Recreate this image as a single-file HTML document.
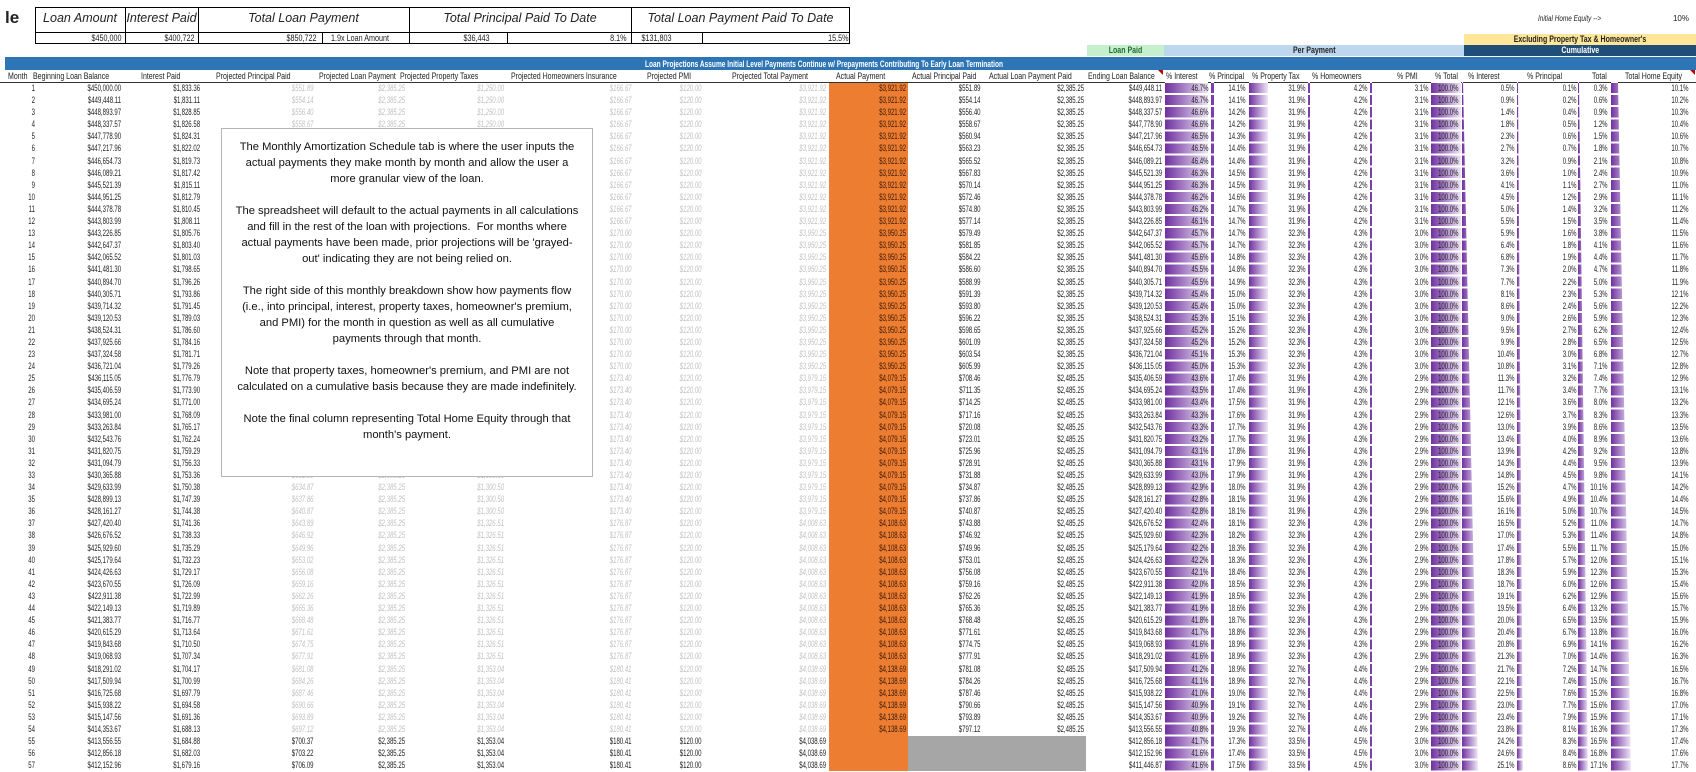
<!DOCTYPE html>
<html><head><meta charset="utf-8">
<style>
body{margin:0;width:1696px;height:771px;position:relative;overflow:hidden;background:#fff;font-family:"Liberation Sans",sans-serif;color:#222}
.c{position:absolute;top:82px;font-size:9px;line-height:12.1px;text-align:right;white-space:nowrap;transform:scaleX(.67);transform-origin:100% 0}
.g{color:#c2c2c2;font-style:italic}
.h{position:absolute;top:70px;font-size:9px;line-height:12px;white-space:nowrap;transform:scaleX(.78);transform-origin:0 0}
.b{position:absolute;top:82px;height:690px;background:repeating-linear-gradient(#fff 0 1px,transparent 1px 11.1px,#fff 11.1px 12.1px),linear-gradient(to right,#7030a0,#efe6f6)}
.d{background:repeating-linear-gradient(#fff 0 1px,transparent 1px 11.1px,#fff 11.1px 12.1px),#7a3fae}
.box{position:absolute;border:1px solid #bbb;box-sizing:border-box}
.tl{position:absolute;font-style:italic;font-size:12.5px;text-align:center}
.tv{position:absolute;top:33px;font-size:9px;line-height:10px;white-space:nowrap;transform:scaleX(.8);transform-origin:100% 0;text-align:right}
.band{position:absolute;font-size:9px;font-weight:bold;line-height:11px;text-align:center;white-space:nowrap}
.band span{display:inline-block;transform:scaleX(.78)}
</style></head><body>

<div style="position:absolute;left:5px;top:8px;font-size:17px;font-weight:bold">le</div>

<!-- top summary table -->
<div style="position:absolute;left:35px;top:7px;width:815px;height:37px;border:1px solid #000;box-sizing:border-box"></div>
<div style="position:absolute;left:35px;top:32px;width:815px;height:1px;background:#000"></div>
<div style="position:absolute;left:125px;top:7px;width:1px;height:37px;background:#000"></div>
<div style="position:absolute;left:198px;top:7px;width:1px;height:37px;background:#000"></div>
<div style="position:absolute;left:409px;top:7px;width:1px;height:37px;background:#000"></div>
<div style="position:absolute;left:631px;top:7px;width:1px;height:37px;background:#000"></div>
<div style="position:absolute;left:322px;top:32px;width:1px;height:12px;background:#000"></div>
<div style="position:absolute;left:507px;top:32px;width:1px;height:12px;background:#000"></div>
<div style="position:absolute;left:702px;top:32px;width:1px;height:12px;background:#000"></div>
<div class="tl" style="left:35px;width:90px;top:11px">Loan Amount</div>
<div class="tl" style="left:125px;width:73px;top:11px">Interest Paid</div>
<div class="tl" style="left:198px;width:211px;top:11px">Total Loan Payment</div>
<div class="tl" style="left:409px;width:222px;top:11px">Total Principal Paid To Date</div>
<div class="tl" style="left:631px;width:219px;top:11px">Total Loan Payment Paid To Date</div>
<div class="tv" style="right:1574px">$450,000</div>
<div class="tv" style="right:1501px">$400,722</div>
<div class="tv" style="right:1379px">$850,722</div>
<div class="tv" style="left:331px;transform-origin:0 0;text-align:left">1.9x Loan Amount</div>
<div class="tv" style="right:1206px">$36,443</div>
<div class="tv" style="right:1069px">8.1%</div>
<div class="tv" style="right:1024px">$131,803</div>
<div class="tv" style="right:847px">15.5%</div>

<div style="position:absolute;left:1538px;top:14px;font-size:8px;font-style:italic;white-space:nowrap;transform:scaleX(.8);transform-origin:0 0">Initial Home Equity --&gt;</div>
<div style="position:absolute;right:7px;top:14px;font-size:8px">10%</div>

<!-- bands -->
<div class="band" style="left:1464px;width:232px;top:34px;background:#ffe699"><span>Excluding Property Tax &amp; Homeowner's</span></div>
<div class="band" style="left:1087px;width:77px;top:45px;background:#c6efce;color:#1e6b2e"><span>Loan Paid</span></div>
<div class="band" style="left:1164px;width:300px;top:45px;background:#bdd7ee"><span>Per Payment</span></div>
<div class="band" style="left:1464px;width:232px;top:45px;background:#1f4e79;color:#fff"><span>Cumulative</span></div>
<div style="position:absolute;left:5px;width:1691px;top:57px;height:13px;background:#2e75b6"></div>
<div style="position:absolute;left:645px;top:59px;font-size:9px;font-weight:bold;color:#fff;white-space:nowrap;transform:scaleX(.73);transform-origin:0 0">Loan Projections Assume Initial Level Payments Continue w/ Prepayments Contributing To Early Loan Termination</div>

<!-- column headers -->
<div class="h" style="left:8px">Month</div>
<div class="h" style="left:33px">Beginning Loan Balance</div>
<div class="h" style="left:141px">Interest Paid</div>
<div class="h" style="left:216px">Projected Principal Paid</div>
<div class="h" style="left:319px">Projected Loan Payment</div>
<div class="h" style="left:400px">Projected Property Taxes</div>
<div class="h" style="left:511px">Projected Homeowners Insurance</div>
<div class="h" style="left:647px">Projected PMI</div>
<div class="h" style="left:732px">Projected Total Payment</div>
<div class="h" style="left:836px">Actual Payment</div>
<div class="h" style="left:912px">Actual Principal Paid</div>
<div class="h" style="left:989px">Actual Loan Payment Paid</div>
<div class="h" style="left:1088px">Ending Loan Balance</div>
<div class="h" style="left:1166px">% Interest</div>
<div class="h" style="left:1209px">% Principal</div>
<div class="h" style="left:1252px">% Property Tax</div>
<div class="h" style="left:1312px">% Homeowners</div>
<div class="h" style="left:1397px">% PMI</div>
<div class="h" style="left:1435px">% Total</div>
<div class="h" style="left:1468px">% Interest</div>
<div class="h" style="left:1527px">% Principal</div>
<div class="h" style="left:1592px">Total</div>
<div class="h" style="left:1625px">Total Home Equity</div>
<div style="position:absolute;left:0;width:1696px;top:82px;height:1px;background:#333"></div>
<div style="position:absolute;left:1158px;top:70px;width:0;height:0;border-top:5px solid #c00000;border-left:5px solid transparent"></div>
<div style="position:absolute;left:1690px;top:70px;width:0;height:0;border-top:5px solid #c00000;border-left:5px solid transparent"></div>

<!-- orange & gray -->
<div style="position:absolute;left:829px;top:83px;width:79px;height:688px;background:#ed7d31"></div>
<div style="position:absolute;left:908px;top:736px;width:178px;height:35px;background:#a6a6a6"></div>

<!-- bars -->
<div class="b" style="left:1165px;width:43px"></div>
<div class="b d" style="left:1211px;width:3px"></div>
<div class="b" style="left:1249px;width:19px"></div>
<div class="b d" style="left:1308px;width:2px"></div>
<div class="b d" style="left:1370px;width:2px"></div>
<div class="b" style="left:1431px;width:30px"></div>
<div class="b" style="left:1462px;width:16px;clip-path:polygon(0 0,1px 0,100% 100%,0 100%)"></div>
<div class="b" style="left:1517px;width:6px;clip-path:polygon(0 0,1px 0,100% 100%,0 100%)"></div>
<div class="b" style="left:1578px;width:10px;clip-path:polygon(0 0,1px 0,100% 100%,0 100%)"></div>
<div class="b" style="left:1611px;width:20px;clip-path:polygon(0 0,35% 0,100% 100%,0 100%)"></div>

<!-- data columns -->
<div class="c" style="right:1661px">1<br>2<br>3<br>4<br>5<br>6<br>7<br>8<br>9<br>10<br>11<br>12<br>13<br>14<br>15<br>16<br>17<br>18<br>19<br>20<br>21<br>22<br>23<br>24<br>25<br>26<br>27<br>28<br>29<br>30<br>31<br>32<br>33<br>34<br>35<br>36<br>37<br>38<br>39<br>40<br>41<br>42<br>43<br>44<br>45<br>46<br>47<br>48<br>49<br>50<br>51<br>52<br>53<br>54<br>55<br>56<br>57</div>

<div class="c" style="right:1575px">$450,000.00<br>$449,448.11<br>$448,893.97<br>$448,337.57<br>$447,778.90<br>$447,217.96<br>$446,654.73<br>$446,089.21<br>$445,521.39<br>$444,951.25<br>$444,378.78<br>$443,803.99<br>$443,226.85<br>$442,647.37<br>$442,065.52<br>$441,481.30<br>$440,894.70<br>$440,305.71<br>$439,714.32<br>$439,120.53<br>$438,524.31<br>$437,925.66<br>$437,324.58<br>$436,721.04<br>$436,115.05<br>$435,406.59<br>$434,695.24<br>$433,981.00<br>$433,263.84<br>$432,543.76<br>$431,820.75<br>$431,094.79<br>$430,365.88<br>$429,633.99<br>$428,899.13<br>$428,161.27<br>$427,420.40<br>$426,676.52<br>$425,929.60<br>$425,179.64<br>$424,426.63<br>$423,670.55<br>$422,911.38<br>$422,149.13<br>$421,383.77<br>$420,615.29<br>$419,843.68<br>$419,068.93<br>$418,291.02<br>$417,509.94<br>$416,725.68<br>$415,938.22<br>$415,147.56<br>$414,353.67<br>$413,556.55<br>$412,856.18<br>$412,152.96</div>

<div class="c" style="right:1496px">$1,833.36<br>$1,831.11<br>$1,828.85<br>$1,826.58<br>$1,824.31<br>$1,822.02<br>$1,819.73<br>$1,817.42<br>$1,815.11<br>$1,812.79<br>$1,810.45<br>$1,808.11<br>$1,805.76<br>$1,803.40<br>$1,801.03<br>$1,798.65<br>$1,796.26<br>$1,793.86<br>$1,791.45<br>$1,789.03<br>$1,786.60<br>$1,784.16<br>$1,781.71<br>$1,779.26<br>$1,776.79<br>$1,773.90<br>$1,771.00<br>$1,768.09<br>$1,765.17<br>$1,762.24<br>$1,759.29<br>$1,756.33<br>$1,753.36<br>$1,750.38<br>$1,747.39<br>$1,744.38<br>$1,741.36<br>$1,738.33<br>$1,735.29<br>$1,732.23<br>$1,729.17<br>$1,726.09<br>$1,722.99<br>$1,719.89<br>$1,716.77<br>$1,713.64<br>$1,710.50<br>$1,707.34<br>$1,704.17<br>$1,700.99<br>$1,697.79<br>$1,694.58<br>$1,691.36<br>$1,688.13<br>$1,684.88<br>$1,682.03<br>$1,679.16</div>

<div class="c" style="right:1382px"><span class="g">$551.89<br>$554.14<br>$556.40<br>$558.67<br>$560.94<br>$563.23<br>$565.52<br>$567.83<br>$570.14<br>$572.46<br>$574.80<br>$577.14<br>$579.49<br>$581.85<br>$584.22<br>$586.60<br>$588.99<br>$591.39<br>$593.80<br>$596.22<br>$598.65<br>$601.09<br>$603.54<br>$605.99<br>$608.46<br>$611.35<br>$614.25<br>$617.16<br>$620.08<br>$623.01<br>$625.96<br>$628.92<br>$631.89<br>$634.87<br>$637.86<br>$640.87<br>$643.89<br>$646.92<br>$649.96<br>$653.02<br>$656.08<br>$659.16<br>$662.26<br>$665.36<br>$668.48<br>$671.61<br>$674.75<br>$677.91<br>$681.08<br>$684.26<br>$687.46<br>$690.66<br>$693.89<br>$697.12</span><br>$700.37<br>$703.22<br>$706.09</div>

<div class="c" style="right:1291px"><span class="g">$2,385.25<br>$2,385.25<br>$2,385.25<br>$2,385.25<br>$2,385.25<br>$2,385.25<br>$2,385.25<br>$2,385.25<br>$2,385.25<br>$2,385.25<br>$2,385.25<br>$2,385.25<br>$2,385.25<br>$2,385.25<br>$2,385.25<br>$2,385.25<br>$2,385.25<br>$2,385.25<br>$2,385.25<br>$2,385.25<br>$2,385.25<br>$2,385.25<br>$2,385.25<br>$2,385.25<br>$2,385.25<br>$2,385.25<br>$2,385.25<br>$2,385.25<br>$2,385.25<br>$2,385.25<br>$2,385.25<br>$2,385.25<br>$2,385.25<br>$2,385.25<br>$2,385.25<br>$2,385.25<br>$2,385.25<br>$2,385.25<br>$2,385.25<br>$2,385.25<br>$2,385.25<br>$2,385.25<br>$2,385.25<br>$2,385.25<br>$2,385.25<br>$2,385.25<br>$2,385.25<br>$2,385.25<br>$2,385.25<br>$2,385.25<br>$2,385.25<br>$2,385.25<br>$2,385.25<br>$2,385.25</span><br>$2,385.25<br>$2,385.25<br>$2,385.25</div>

<div class="c" style="right:1192px"><span class="g">$1,250.00<br>$1,250.00<br>$1,250.00<br>$1,250.00<br>$1,250.00<br>$1,250.00<br>$1,250.00<br>$1,250.00<br>$1,250.00<br>$1,250.00<br>$1,250.00<br>$1,250.00<br>$1,275.00<br>$1,275.00<br>$1,275.00<br>$1,275.00<br>$1,275.00<br>$1,275.00<br>$1,275.00<br>$1,275.00<br>$1,275.00<br>$1,275.00<br>$1,275.00<br>$1,275.00<br>$1,300.50<br>$1,300.50<br>$1,300.50<br>$1,300.50<br>$1,300.50<br>$1,300.50<br>$1,300.50<br>$1,300.50<br>$1,300.50<br>$1,300.50<br>$1,300.50<br>$1,300.50<br>$1,326.51<br>$1,326.51<br>$1,326.51<br>$1,326.51<br>$1,326.51<br>$1,326.51<br>$1,326.51<br>$1,326.51<br>$1,326.51<br>$1,326.51<br>$1,326.51<br>$1,326.51<br>$1,353.04<br>$1,353.04<br>$1,353.04<br>$1,353.04<br>$1,353.04<br>$1,353.04</span><br>$1,353.04<br>$1,353.04<br>$1,353.04</div>

<div class="c" style="right:1064px"><span class="g">$166.67<br>$166.67<br>$166.67<br>$166.67<br>$166.67<br>$166.67<br>$166.67<br>$166.67<br>$166.67<br>$166.67<br>$166.67<br>$166.67<br>$170.00<br>$170.00<br>$170.00<br>$170.00<br>$170.00<br>$170.00<br>$170.00<br>$170.00<br>$170.00<br>$170.00<br>$170.00<br>$170.00<br>$173.40<br>$173.40<br>$173.40<br>$173.40<br>$173.40<br>$173.40<br>$173.40<br>$173.40<br>$173.40<br>$173.40<br>$173.40<br>$173.40<br>$176.87<br>$176.87<br>$176.87<br>$176.87<br>$176.87<br>$176.87<br>$176.87<br>$176.87<br>$176.87<br>$176.87<br>$176.87<br>$176.87<br>$180.41<br>$180.41<br>$180.41<br>$180.41<br>$180.41<br>$180.41</span><br>$180.41<br>$180.41<br>$180.41</div>

<div class="c" style="right:994px"><span class="g">$120.00<br>$120.00<br>$120.00<br>$120.00<br>$120.00<br>$120.00<br>$120.00<br>$120.00<br>$120.00<br>$120.00<br>$120.00<br>$120.00<br>$120.00<br>$120.00<br>$120.00<br>$120.00<br>$120.00<br>$120.00<br>$120.00<br>$120.00<br>$120.00<br>$120.00<br>$120.00<br>$120.00<br>$120.00<br>$120.00<br>$120.00<br>$120.00<br>$120.00<br>$120.00<br>$120.00<br>$120.00<br>$120.00<br>$120.00<br>$120.00<br>$120.00<br>$120.00<br>$120.00<br>$120.00<br>$120.00<br>$120.00<br>$120.00<br>$120.00<br>$120.00<br>$120.00<br>$120.00<br>$120.00<br>$120.00<br>$120.00<br>$120.00<br>$120.00<br>$120.00<br>$120.00<br>$120.00</span><br>$120.00<br>$120.00<br>$120.00</div>

<div class="c" style="right:870px"><span class="g">$3,921.92<br>$3,921.92<br>$3,921.92<br>$3,921.92<br>$3,921.92<br>$3,921.92<br>$3,921.92<br>$3,921.92<br>$3,921.92<br>$3,921.92<br>$3,921.92<br>$3,921.92<br>$3,950.25<br>$3,950.25<br>$3,950.25<br>$3,950.25<br>$3,950.25<br>$3,950.25<br>$3,950.25<br>$3,950.25<br>$3,950.25<br>$3,950.25<br>$3,950.25<br>$3,950.25<br>$3,979.15<br>$3,979.15<br>$3,979.15<br>$3,979.15<br>$3,979.15<br>$3,979.15<br>$3,979.15<br>$3,979.15<br>$3,979.15<br>$3,979.15<br>$3,979.15<br>$3,979.15<br>$4,008.63<br>$4,008.63<br>$4,008.63<br>$4,008.63<br>$4,008.63<br>$4,008.63<br>$4,008.63<br>$4,008.63<br>$4,008.63<br>$4,008.63<br>$4,008.63<br>$4,008.63<br>$4,038.69<br>$4,038.69<br>$4,038.69<br>$4,038.69<br>$4,038.69<br>$4,038.69</span><br>$4,038.69<br>$4,038.69<br>$4,038.69</div>

<div class="c" style="right:790px;color:#3a1a08">$3,921.92<br>$3,921.92<br>$3,921.92<br>$3,921.92<br>$3,921.92<br>$3,921.92<br>$3,921.92<br>$3,921.92<br>$3,921.92<br>$3,921.92<br>$3,921.92<br>$3,921.92<br>$3,950.25<br>$3,950.25<br>$3,950.25<br>$3,950.25<br>$3,950.25<br>$3,950.25<br>$3,950.25<br>$3,950.25<br>$3,950.25<br>$3,950.25<br>$3,950.25<br>$3,950.25<br>$4,079.15<br>$4,079.15<br>$4,079.15<br>$4,079.15<br>$4,079.15<br>$4,079.15<br>$4,079.15<br>$4,079.15<br>$4,079.15<br>$4,079.15<br>$4,079.15<br>$4,079.15<br>$4,108.63<br>$4,108.63<br>$4,108.63<br>$4,108.63<br>$4,108.63<br>$4,108.63<br>$4,108.63<br>$4,108.63<br>$4,108.63<br>$4,108.63<br>$4,108.63<br>$4,108.63<br>$4,138.69<br>$4,138.69<br>$4,138.69<br>$4,138.69<br>$4,138.69<br>$4,138.69</div>

<div class="c" style="right:715px">$551.89<br>$554.14<br>$556.40<br>$558.67<br>$560.94<br>$563.23<br>$565.52<br>$567.83<br>$570.14<br>$572.46<br>$574.80<br>$577.14<br>$579.49<br>$581.85<br>$584.22<br>$586.60<br>$588.99<br>$591.39<br>$593.80<br>$596.22<br>$598.65<br>$601.09<br>$603.54<br>$605.99<br>$708.46<br>$711.35<br>$714.25<br>$717.16<br>$720.08<br>$723.01<br>$725.96<br>$728.91<br>$731.88<br>$734.87<br>$737.86<br>$740.87<br>$743.88<br>$746.92<br>$749.96<br>$753.01<br>$756.08<br>$759.16<br>$762.26<br>$765.36<br>$768.48<br>$771.61<br>$774.75<br>$777.91<br>$781.08<br>$784.26<br>$787.46<br>$790.66<br>$793.89<br>$797.12</div>

<div class="c" style="right:612px">$2,385.25<br>$2,385.25<br>$2,385.25<br>$2,385.25<br>$2,385.25<br>$2,385.25<br>$2,385.25<br>$2,385.25<br>$2,385.25<br>$2,385.25<br>$2,385.25<br>$2,385.25<br>$2,385.25<br>$2,385.25<br>$2,385.25<br>$2,385.25<br>$2,385.25<br>$2,385.25<br>$2,385.25<br>$2,385.25<br>$2,385.25<br>$2,385.25<br>$2,385.25<br>$2,385.25<br>$2,485.25<br>$2,485.25<br>$2,485.25<br>$2,485.25<br>$2,485.25<br>$2,485.25<br>$2,485.25<br>$2,485.25<br>$2,485.25<br>$2,485.25<br>$2,485.25<br>$2,485.25<br>$2,485.25<br>$2,485.25<br>$2,485.25<br>$2,485.25<br>$2,485.25<br>$2,485.25<br>$2,485.25<br>$2,485.25<br>$2,485.25<br>$2,485.25<br>$2,485.25<br>$2,485.25<br>$2,485.25<br>$2,485.25<br>$2,485.25<br>$2,485.25<br>$2,485.25<br>$2,485.25</div>

<div class="c" style="right:534px">$449,448.11<br>$448,893.97<br>$448,337.57<br>$447,778.90<br>$447,217.96<br>$446,654.73<br>$446,089.21<br>$445,521.39<br>$444,951.25<br>$444,378.78<br>$443,803.99<br>$443,226.85<br>$442,647.37<br>$442,065.52<br>$441,481.30<br>$440,894.70<br>$440,305.71<br>$439,714.32<br>$439,120.53<br>$438,524.31<br>$437,925.66<br>$437,324.58<br>$436,721.04<br>$436,115.05<br>$435,406.59<br>$434,695.24<br>$433,981.00<br>$433,263.84<br>$432,543.76<br>$431,820.75<br>$431,094.79<br>$430,365.88<br>$429,633.99<br>$428,899.13<br>$428,161.27<br>$427,420.40<br>$426,676.52<br>$425,929.60<br>$425,179.64<br>$424,426.63<br>$423,670.55<br>$422,911.38<br>$422,149.13<br>$421,383.77<br>$420,615.29<br>$419,843.68<br>$419,068.93<br>$418,291.02<br>$417,509.94<br>$416,725.68<br>$415,938.22<br>$415,147.56<br>$414,353.67<br>$413,556.55<br>$412,856.18<br>$412,152.96<br>$411,446.87</div>

<div class="c" style="right:487px">46.7%<br>46.7%<br>46.6%<br>46.6%<br>46.5%<br>46.5%<br>46.4%<br>46.3%<br>46.3%<br>46.2%<br>46.2%<br>46.1%<br>45.7%<br>45.7%<br>45.6%<br>45.5%<br>45.5%<br>45.4%<br>45.4%<br>45.3%<br>45.2%<br>45.2%<br>45.1%<br>45.0%<br>43.6%<br>43.5%<br>43.4%<br>43.3%<br>43.3%<br>43.2%<br>43.1%<br>43.1%<br>43.0%<br>42.9%<br>42.8%<br>42.8%<br>42.4%<br>42.3%<br>42.2%<br>42.2%<br>42.1%<br>42.0%<br>41.9%<br>41.9%<br>41.8%<br>41.7%<br>41.6%<br>41.6%<br>41.2%<br>41.1%<br>41.0%<br>40.9%<br>40.9%<br>40.8%<br>41.7%<br>41.6%<br>41.6%</div>

<div class="c" style="right:450px">14.1%<br>14.1%<br>14.2%<br>14.2%<br>14.3%<br>14.4%<br>14.4%<br>14.5%<br>14.5%<br>14.6%<br>14.7%<br>14.7%<br>14.7%<br>14.7%<br>14.8%<br>14.8%<br>14.9%<br>15.0%<br>15.0%<br>15.1%<br>15.2%<br>15.2%<br>15.3%<br>15.3%<br>17.4%<br>17.4%<br>17.5%<br>17.6%<br>17.7%<br>17.7%<br>17.8%<br>17.9%<br>17.9%<br>18.0%<br>18.1%<br>18.1%<br>18.1%<br>18.2%<br>18.3%<br>18.3%<br>18.4%<br>18.5%<br>18.5%<br>18.6%<br>18.7%<br>18.8%<br>18.9%<br>18.9%<br>18.9%<br>18.9%<br>19.0%<br>19.1%<br>19.2%<br>19.3%<br>17.3%<br>17.4%<br>17.5%</div>

<div class="c" style="right:390px">31.9%<br>31.9%<br>31.9%<br>31.9%<br>31.9%<br>31.9%<br>31.9%<br>31.9%<br>31.9%<br>31.9%<br>31.9%<br>31.9%<br>32.3%<br>32.3%<br>32.3%<br>32.3%<br>32.3%<br>32.3%<br>32.3%<br>32.3%<br>32.3%<br>32.3%<br>32.3%<br>32.3%<br>31.9%<br>31.9%<br>31.9%<br>31.9%<br>31.9%<br>31.9%<br>31.9%<br>31.9%<br>31.9%<br>31.9%<br>31.9%<br>31.9%<br>32.3%<br>32.3%<br>32.3%<br>32.3%<br>32.3%<br>32.3%<br>32.3%<br>32.3%<br>32.3%<br>32.3%<br>32.3%<br>32.3%<br>32.7%<br>32.7%<br>32.7%<br>32.7%<br>32.7%<br>32.7%<br>33.5%<br>33.5%<br>33.5%</div>

<div class="c" style="right:328px">4.2%<br>4.2%<br>4.2%<br>4.2%<br>4.2%<br>4.2%<br>4.2%<br>4.2%<br>4.2%<br>4.2%<br>4.2%<br>4.2%<br>4.3%<br>4.3%<br>4.3%<br>4.3%<br>4.3%<br>4.3%<br>4.3%<br>4.3%<br>4.3%<br>4.3%<br>4.3%<br>4.3%<br>4.3%<br>4.3%<br>4.3%<br>4.3%<br>4.3%<br>4.3%<br>4.3%<br>4.3%<br>4.3%<br>4.3%<br>4.3%<br>4.3%<br>4.3%<br>4.3%<br>4.3%<br>4.3%<br>4.3%<br>4.3%<br>4.3%<br>4.3%<br>4.3%<br>4.3%<br>4.3%<br>4.3%<br>4.4%<br>4.4%<br>4.4%<br>4.4%<br>4.4%<br>4.4%<br>4.5%<br>4.5%<br>4.5%</div>

<div class="c" style="right:267px">3.1%<br>3.1%<br>3.1%<br>3.1%<br>3.1%<br>3.1%<br>3.1%<br>3.1%<br>3.1%<br>3.1%<br>3.1%<br>3.1%<br>3.0%<br>3.0%<br>3.0%<br>3.0%<br>3.0%<br>3.0%<br>3.0%<br>3.0%<br>3.0%<br>3.0%<br>3.0%<br>3.0%<br>2.9%<br>2.9%<br>2.9%<br>2.9%<br>2.9%<br>2.9%<br>2.9%<br>2.9%<br>2.9%<br>2.9%<br>2.9%<br>2.9%<br>2.9%<br>2.9%<br>2.9%<br>2.9%<br>2.9%<br>2.9%<br>2.9%<br>2.9%<br>2.9%<br>2.9%<br>2.9%<br>2.9%<br>2.9%<br>2.9%<br>2.9%<br>2.9%<br>2.9%<br>2.9%<br>3.0%<br>3.0%<br>3.0%</div>

<div class="c" style="right:237px">100.0%<br>100.0%<br>100.0%<br>100.0%<br>100.0%<br>100.0%<br>100.0%<br>100.0%<br>100.0%<br>100.0%<br>100.0%<br>100.0%<br>100.0%<br>100.0%<br>100.0%<br>100.0%<br>100.0%<br>100.0%<br>100.0%<br>100.0%<br>100.0%<br>100.0%<br>100.0%<br>100.0%<br>100.0%<br>100.0%<br>100.0%<br>100.0%<br>100.0%<br>100.0%<br>100.0%<br>100.0%<br>100.0%<br>100.0%<br>100.0%<br>100.0%<br>100.0%<br>100.0%<br>100.0%<br>100.0%<br>100.0%<br>100.0%<br>100.0%<br>100.0%<br>100.0%<br>100.0%<br>100.0%<br>100.0%<br>100.0%<br>100.0%<br>100.0%<br>100.0%<br>100.0%<br>100.0%<br>100.0%<br>100.0%<br>100.0%</div>

<div class="c" style="right:181px">0.5%<br>0.9%<br>1.4%<br>1.8%<br>2.3%<br>2.7%<br>3.2%<br>3.6%<br>4.1%<br>4.5%<br>5.0%<br>5.5%<br>5.9%<br>6.4%<br>6.8%<br>7.3%<br>7.7%<br>8.1%<br>8.6%<br>9.0%<br>9.5%<br>9.9%<br>10.4%<br>10.8%<br>11.3%<br>11.7%<br>12.1%<br>12.6%<br>13.0%<br>13.4%<br>13.9%<br>14.3%<br>14.8%<br>15.2%<br>15.6%<br>16.1%<br>16.5%<br>17.0%<br>17.4%<br>17.8%<br>18.3%<br>18.7%<br>19.1%<br>19.5%<br>20.0%<br>20.4%<br>20.8%<br>21.3%<br>21.7%<br>22.1%<br>22.5%<br>23.0%<br>23.4%<br>23.8%<br>24.2%<br>24.6%<br>25.1%</div>

<div class="c" style="right:119px">0.1%<br>0.2%<br>0.4%<br>0.5%<br>0.6%<br>0.7%<br>0.9%<br>1.0%<br>1.1%<br>1.2%<br>1.4%<br>1.5%<br>1.6%<br>1.8%<br>1.9%<br>2.0%<br>2.2%<br>2.3%<br>2.4%<br>2.6%<br>2.7%<br>2.8%<br>3.0%<br>3.1%<br>3.2%<br>3.4%<br>3.6%<br>3.7%<br>3.9%<br>4.0%<br>4.2%<br>4.4%<br>4.5%<br>4.7%<br>4.9%<br>5.0%<br>5.2%<br>5.3%<br>5.5%<br>5.7%<br>5.9%<br>6.0%<br>6.2%<br>6.4%<br>6.5%<br>6.7%<br>6.9%<br>7.0%<br>7.2%<br>7.4%<br>7.6%<br>7.7%<br>7.9%<br>8.1%<br>8.3%<br>8.4%<br>8.6%</div>

<div class="c" style="right:88px">0.3%<br>0.6%<br>0.9%<br>1.2%<br>1.5%<br>1.8%<br>2.1%<br>2.4%<br>2.7%<br>2.9%<br>3.2%<br>3.5%<br>3.8%<br>4.1%<br>4.4%<br>4.7%<br>5.0%<br>5.3%<br>5.6%<br>5.9%<br>6.2%<br>6.5%<br>6.8%<br>7.1%<br>7.4%<br>7.7%<br>8.0%<br>8.3%<br>8.6%<br>8.9%<br>9.2%<br>9.5%<br>9.8%<br>10.1%<br>10.4%<br>10.7%<br>11.0%<br>11.4%<br>11.7%<br>12.0%<br>12.3%<br>12.6%<br>12.9%<br>13.2%<br>13.5%<br>13.8%<br>14.1%<br>14.4%<br>14.7%<br>15.0%<br>15.3%<br>15.6%<br>15.9%<br>16.3%<br>16.5%<br>16.8%<br>17.1%</div>

<div class="c" style="right:7px">10.1%<br>10.2%<br>10.3%<br>10.4%<br>10.6%<br>10.7%<br>10.8%<br>10.9%<br>11.0%<br>11.1%<br>11.2%<br>11.4%<br>11.5%<br>11.6%<br>11.7%<br>11.8%<br>11.9%<br>12.1%<br>12.2%<br>12.3%<br>12.4%<br>12.5%<br>12.7%<br>12.8%<br>12.9%<br>13.1%<br>13.2%<br>13.3%<br>13.5%<br>13.6%<br>13.8%<br>13.9%<br>14.1%<br>14.2%<br>14.4%<br>14.5%<br>14.7%<br>14.8%<br>15.0%<br>15.1%<br>15.3%<br>15.4%<br>15.6%<br>15.7%<br>15.9%<br>16.0%<br>16.2%<br>16.3%<br>16.5%<br>16.7%<br>16.8%<br>17.0%<br>17.1%<br>17.3%<br>17.4%<br>17.6%<br>17.7%</div>

<!-- text box -->
<div style="position:absolute;left:221px;top:128px;width:372px;height:349px;box-sizing:border-box;border:1px solid #b5b5b5;background:#fff;padding-top:10px;text-align:center;font-size:11.2px;line-height:16px;color:#111">The Monthly Amortization Schedule tab is where the user inputs the<br>actual payments they make month by month and allow the user a<br>more granular view of the loan.<br><br>The spreadsheet will default to the actual payments in all calculations<br>and fill in the rest of the loan with projections.&nbsp; For months where<br>actual payments have been made, prior projections will be 'grayed-<br>out' indicating they are not being relied on.<br><br>The right side of this monthly breakdown show how payments flow<br>(i.e., into principal, interest, property taxes, homeowner's premium,<br>and PMI) for the month in question as well as all cumulative<br>payments through that month.<br><br>Note that property taxes, homeowner's premium, and PMI are not<br>calculated on a cumulative basis because they are made indefinitely.<br><br>Note the final column representing Total Home Equity through that<br>month's payment.</div>

</body></html>
